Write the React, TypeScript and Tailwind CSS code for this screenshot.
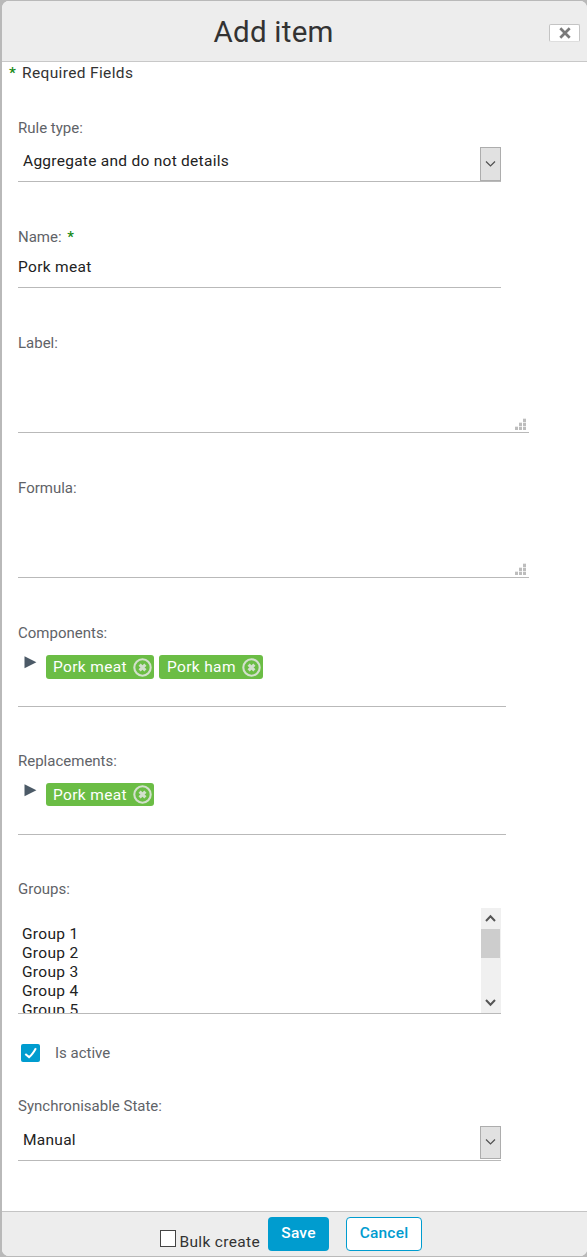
import type { ReactNode } from "react";

function Label({ children }: { children: ReactNode }) {
  return <div className="h-5 text-[15px] leading-5 text-[#5f6368]">{children}</div>;
}

function Select({ value, gap, arrowHeight }: { value: string; gap: string; arrowHeight: string }) {
  return (
    <div className={`flex h-[35px] w-[483px] border-b border-[#b9b9b9] ${gap}`}>
      <span className="flex-1 pl-[5px] text-[15.5px] leading-[28px] tracking-[0.27px] text-[#222]">{value}</span>
      <span className={`flex w-[21px] items-center justify-center border border-[#adadad] bg-[#e1e1e1] ${arrowHeight}`}>
        <svg className="mb-px" width="11" height="8" viewBox="0 0 11 8" fill="none" stroke="#505050" strokeWidth="1.2">
          <path d="M1 1.5 5.5 6 10 1.5" />
        </svg>
      </span>
    </div>
  );
}

function TextArea() {
  return (
    <div className="flex h-20 w-[511px] items-end justify-end border-b border-[#b9b9b9] pr-[3px] pb-[2px]">
      <svg width="11" height="12" viewBox="0 0 11 12" fill="#bdbdbd" shapeRendering="crispEdges">
        <path d="M8 1h3v3H8zM4 5h3v3H4zM8 5h3v3H8zM0 9h3v3H0zM4 9h3v3H4zM8 9h3v3H8z" />
        <path fill="#eaeaea" d="M8 0h3v1H8zM4 4h3v1H4zM8 4h3v1H8zM0 8h3v1H0zM4 8h3v1H4zM8 8h3v1H8z" />
      </svg>
    </div>
  );
}

function Chips({ items }: { items: { name: string; size: string }[] }) {
  return (
    <div className="flex h-16 w-[488px] items-start border-b border-[#b9b9b9] pl-[6px]">
      <svg className="mt-[13px] mr-[9px]" width="13" height="13" viewBox="0 0 13 13">
        <path d="M.5.2 12.4 6.3.5 12.3z" fill="#4c5a67" />
      </svg>
      <div className="mt-3 flex gap-[5px]">
        {items.map((item) => (
          <span
            key={item.name}
            className={`flex items-center justify-between rounded-[3px] bg-[#6bbd45] pr-[2px] text-[15.5px] leading-6 tracking-[0.35px] whitespace-nowrap text-white ${item.size}`}
          >
            {item.name}
            <svg width="19" height="19" viewBox="0 0 19 19" fill="none" stroke="#d3e0cd">
              <circle cx="9.5" cy="9.5" r="8.2" strokeWidth="2.1" />
              <path d="m6.6 6.6 5.8 5.8m0-5.8-5.8 5.8" strokeWidth="3" />
            </svg>
          </span>
        ))}
      </div>
    </div>
  );
}

export default function App() {
  const groups = ["Group 1", "Group 2", "Group 3", "Group 4", "Group 5"];
  return (
    <div className="h-[1257px] w-[587px] bg-[#b9b9b9] pt-px pb-px pl-[2px] font-['Roboto',sans-serif]">
      <div className="flex h-[1255px] flex-col overflow-hidden rounded-[7px] bg-white">
        <header className="flex h-[61px] shrink-0 items-center border-b border-[#c8c8c8] bg-[#ededed]">
          <h1 className="ml-[211.5px] flex-1 pt-px text-[29.5px] leading-[60px] tracking-[0.25px] text-[#333]">Add item</h1>
          <button className="mt-1 mr-[7px] flex h-[18px] w-[31px] items-center justify-center rounded-[2px] border border-[#c4c4c4] border-b-[#dedede] bg-white">
            <svg width="12" height="12" viewBox="0 0 12 12" fill="none" stroke="#7a7a7a" strokeWidth="2.7">
              <path d="m1.3 1.3 9.4 9.4m0-9.4-9.4 9.4" />
            </svg>
          </button>
        </header>

        <div className="flex h-[22px] text-[15.5px] leading-[22px] tracking-[0.36px] text-[#333]">
          <span className="w-5 pl-[7px] font-medium text-[#168a16]">*</span>
          Required Fields
        </div>

        <main className="flex-1 pl-4">
          <section className="mt-[34px]">
            <Label>Rule type:</Label>
            <Select value="Aggregate and do not details" gap="mt-[9px]" arrowHeight="h-[34px]" />
          </section>
          <section className="mt-[45px]">
            <Label>
              Name: <span className="ml-[2px] font-medium text-[#168a16]">*</span>
            </Label>
            <div className="h-[41px] w-[483px] border-b border-[#b9b9b9] text-[15.5px] leading-10 tracking-[0.33px] text-[#222]">
              Pork meat
            </div>
          </section>
          <section className="mt-[45px]">
            <Label>Label:</Label>
            <TextArea />
          </section>
          <section className="mt-[45px]">
            <Label>Formula:</Label>
            <TextArea />
          </section>
          <section className="mt-[45px]">
            <Label>Components:</Label>
            <Chips
              items={[
                { name: "Pork meat", size: "h-6 w-[108px] pl-[7px]" },
                { name: "Pork ham", size: "h-6 w-[104px] pl-2" },
              ]}
            />
          </section>
          <section className="mt-11">
            <Label>Replacements:</Label>
            <Chips items={[{ name: "Pork meat", size: "h-[23px] w-[108px] pl-[7px]" }]} />
          </section>
          <section className="mt-11">
            <Label>Groups:</Label>
            <div className="mt-[9px] flex h-[106px] w-[483px] overflow-hidden border-b border-[#b9b9b9]">
              <ul className="flex-1 pt-[17px] pl-1 text-[15.5px] leading-[19px] tracking-[0.3px] text-[#222]">
                {groups.map((g) => (
                  <li key={g}>{g}</li>
                ))}
              </ul>
              <div className="flex w-5 flex-col items-center bg-[#f0f0f0] pr-px">
                <svg className="mt-[6px]" width="11" height="9" viewBox="0 0 11 9" fill="none" stroke="#555" strokeWidth="2">
                  <path d="M1 7 5.5 2.3 10 7" />
                </svg>
                <div className="mt-[6px] h-[29px] w-[19px] bg-[#cdcdcd]" />
                <svg className="mt-auto mb-[6px]" width="11" height="9" viewBox="0 0 11 9" fill="none" stroke="#555" strokeWidth="2">
                  <path d="M1 2 5.5 6.7 10 2" />
                </svg>
              </div>
            </div>
          </section>
          <div className="mt-[29px] flex h-5 items-center pl-[3px]">
            <span className="flex h-[18px] w-[19px] items-center justify-center rounded-[2px] bg-[#009ccf]">
              <svg width="13" height="12" viewBox="0 0 13 12" fill="none" stroke="white" strokeWidth="2">
                <path d="m1.3 6.9 3.8 3.2C7.6 8.2 9.8 5 11.9 1.2" />
              </svg>
            </span>
            <span className="ml-[15px] text-[15px] leading-5 text-[#5f6368]">Is active</span>
          </div>
          <section className="mt-[33px]">
            <Label>Synchronisable State:</Label>
            <Select value="Manual" gap="mt-[10px]" arrowHeight="h-[33px]" />
          </section>
        </main>

        <footer className="flex h-[45px] shrink-0 items-start border-t border-[#c4c4c4] bg-[#ededed] pl-[158px]">
          <span className="mt-[18px] h-[17px] w-4 border border-[#444] bg-white" />
          <span className="mt-5 ml-[3.5px] w-[88.5px] text-[15.5px] leading-5 tracking-[0.33px] whitespace-nowrap text-[#333]">
            Bulk create
          </span>
          <button className="mt-[5px] h-[34px] w-[61px] rounded-[4px] bg-[#009ccf] text-[15.5px] font-medium tracking-[0.2px] text-white">
            Save
          </button>
          <button className="mt-[5px] ml-[17px] h-[34px] w-[76px] rounded-[4px] border border-[#009ccf] bg-white text-[15.5px] font-medium tracking-[0.2px] text-[#009ccf]">
            Cancel
          </button>
        </footer>
      </div>
    </div>
  );
}
